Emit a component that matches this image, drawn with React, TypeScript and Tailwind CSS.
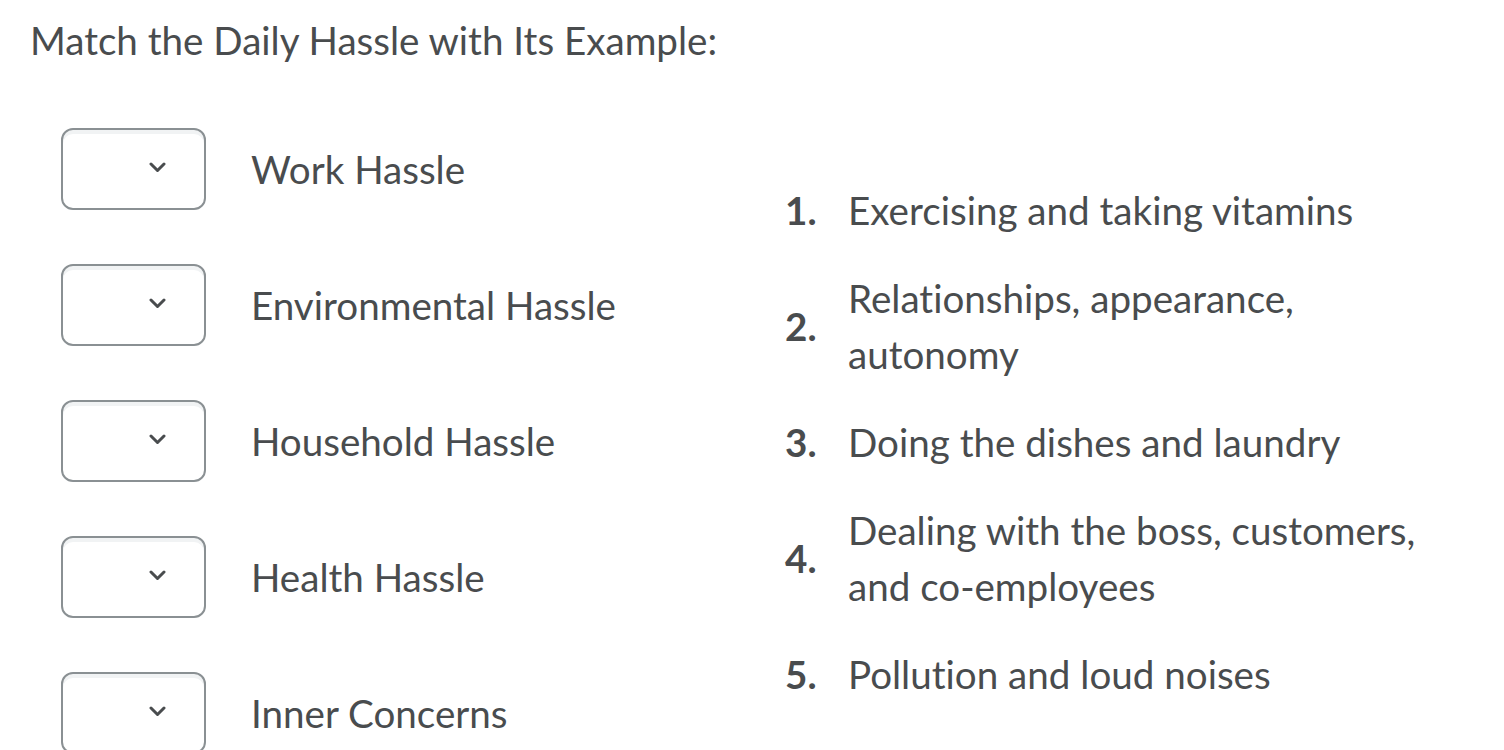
const hassles = ['Work Hassle', 'Environmental Hassle', 'Household Hassle', 'Health Hassle', 'Inner Concerns']

const examples = [
  ['Exercising and taking vitamins'],
  ['Relationships, appearance,', 'autonomy'],
  ['Doing the dishes and laundry'],
  ['Dealing with the boss, customers,', 'and co-employees'],
  ['Pollution and loud noises'],
]

function Select() {
  return (
    <div className="relative h-[82px] w-[145px] shrink-0 rounded-[12px] border-2 border-[#8a9093] bg-white shadow-[inset_0_4px_0_#f1f3f4]">
      <svg className="absolute left-[86px] top-[32px]" width="17" height="11" viewBox="0 0 17 11" fill="none">
        <polyline points="2,2 8.5,8.5 15,2" stroke="#494c4e" strokeWidth="3" strokeLinecap="round" strokeLinejoin="round" />
      </svg>
    </div>
  )
}

export default function App() {
  return (
    <div className="min-h-[750px] bg-white font-['Lato','Noto_Sans',sans-serif] text-[#494c4e] [font-variant-ligatures:none]">
      <h1 className="pl-[30px] pt-[14px] text-[38.6px] leading-[52px]">Match the Daily Hassle with Its Example:</h1>

      <div className="flex pt-[62px]">
        {/* left column: dropdowns with the hassle names */}
        <div className="flex w-[785px] shrink-0 flex-col gap-[54px] pl-[61px]">
          {hassles.map(h => (
            <div key={h} className="flex items-center gap-[45px]">
              <Select />
              <span className="text-[38.6px] leading-[52px]">{h}</span>
            </div>
          ))}
        </div>

        {/* right column: numbered examples */}
        <ol className="flex flex-col gap-[32px] pt-[54px]">
          {examples.map((lines, i) => (
            <li key={i} className="flex items-center">
              <span className="w-[63px] shrink-0 text-[38.6px] font-bold leading-[56px]">{i + 1}.</span>
              <div className="text-[38.6px] leading-[56px]">
                {lines.map(l => (
                  <div key={l} className="whitespace-nowrap">{l}</div>
                ))}
              </div>
            </li>
          ))}
        </ol>
      </div>
    </div>
  )
}
